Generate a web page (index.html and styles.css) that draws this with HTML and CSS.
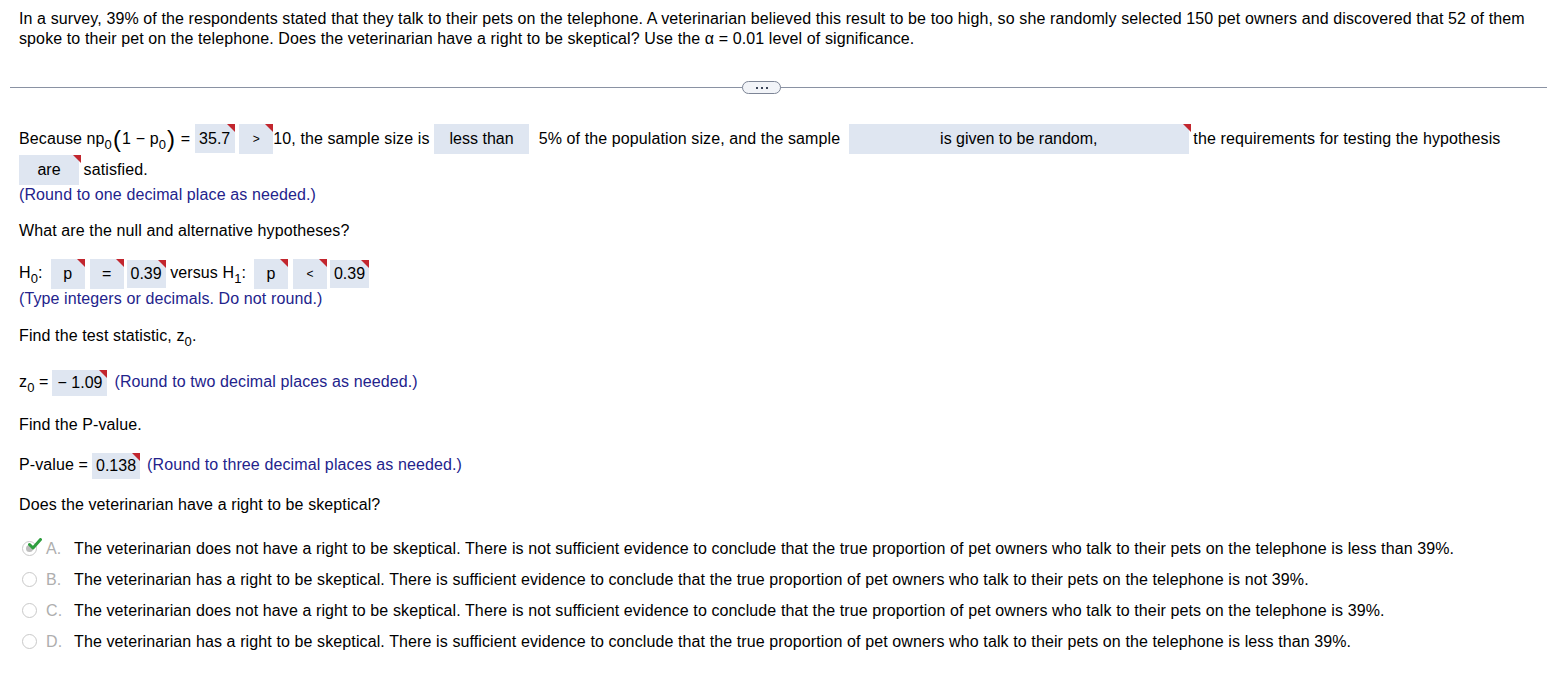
FILE: index.html
```html
<!DOCTYPE html>
<html>
<head>
<meta charset="utf-8">
<link rel="stylesheet" href="styles.css">
</head>
<body>
<div class="page">
  <div class="question">In a survey, 39% of the respondents stated that they talk to their pets on the telephone. A veterinarian believed this result to be too high, so she randomly selected 150 pet owners and discovered that 52 of them spoke to their pet on the telephone. Does the veterinarian have a right to be skeptical? Use the α = 0.01 level of significance.</div>

  <div class="divider"><span class="pill"><i></i><i></i><i></i></span></div>

  <div class="answer">
    <p class="req">Because np<sub>0</sub><span class="paren">(</span>1 − p<sub>0</sub><span class="paren">)</span> = <span class="box num w40">35.7<b class="mark"></b></span> <span class="box drop w34 small">&gt;<b class="mark"></b></span>10, the sample size is <span class="box drop w95 gapr">less than</span> 5% of the population size, and the sample <span class="box drop w340 gapl">is given to be random,<b class="mark out"></b></span> the requirements for testing the hypothesis <span class="box drop w60">are<b class="mark out"></b></span> satisfied.</p>
    <p class="hint">(Round to one decimal place as needed.)</p>

    <p class="txt m16">What are the null and alternative hypotheses?</p>

    <p class="hyp">H<sub>0</sub>:<span class="box drop w34 first">p<b class="mark"></b></span><span class="box drop w34">=<b class="mark"></b></span><span class="box num w39 tight">0.39<b class="mark"></b></span> versus H<sub>1</sub>:<span class="box drop w34 first">p<b class="mark"></b></span><span class="box drop w34 small">&lt;<b class="mark"></b></span><span class="box num w39 tight">0.39<b class="mark"></b></span></p>
    <p class="hint m1">(Type integers or decimals. Do not round.)</p>

    <p class="txt m17">Find the test statistic, z<sub>0</sub>.</p>

    <p class="inrow m23">z<sub>0</sub> =<span class="box inp w55">− 1.09<b class="mark"></b></span><span class="hint">(Round to two decimal places as needed.)</span></p>

    <p class="txt m20">Find the P-value.</p>

    <p class="inrow m17">P-value =<span class="box inp w48">0.138<b class="mark"></b></span><span class="hint">(Round to three decimal places as needed.)</span></p>

    <p class="txt m17">Does the veterinarian have a right to be skeptical?</p>

    <ul class="options">
      <li><span class="radio sel"><svg class="check" width="14" height="12" viewBox="0 0 14 12"><path d="M1.5 6.5 L5 10 L12.5 1.5" fill="none" stroke="#2e9e3e" stroke-width="3" stroke-linecap="round" stroke-linejoin="round"/></svg></span><span class="letter">A.</span><span>The veterinarian does not have a right to be skeptical. There is not sufficient evidence to conclude that the true proportion of pet owners who talk to their pets on the telephone is less than 39%.</span></li>
      <li><span class="radio"></span><span class="letter">B.</span><span>The veterinarian has a right to be skeptical. There is sufficient evidence to conclude that the true proportion of pet owners who talk to their pets on the telephone is not 39%.</span></li>
      <li><span class="radio"></span><span class="letter">C.</span><span>The veterinarian does not have a right to be skeptical. There is not sufficient evidence to conclude that the true proportion of pet owners who talk to their pets on the telephone is 39%.</span></li>
      <li><span class="radio"></span><span class="letter">D.</span><span>The veterinarian has a right to be skeptical. There is sufficient evidence to conclude that the true proportion of pet owners who talk to their pets on the telephone is less than 39%.</span></li>
    </ul>
  </div>
</div>
</body>
</html>
```

FILE: styles.css
```css
* { box-sizing: border-box; }
html, body { margin: 0; padding: 0; background: #fff; }
body {
  font-family: "Liberation Sans", Arial, sans-serif;
  font-size: 16px;
  letter-spacing: 0.11px;
  color: #000;
}
.page { padding: 0 10px; }
p { margin: 0; }

.question {
  padding: 9px 9px 0;
  line-height: 20px;
}

.divider {
  position: relative;
  margin-top: 38px;
  height: 1px;
  background: #8a92a3;
}
.pill {
  position: absolute;
  left: 732px;
  top: -6px;
  width: 39px;
  height: 13px;
  border: 1px solid #7d8596;
  border-radius: 7px;
  background: #f2f4f8;
  display: flex;
  align-items: center;
  justify-content: center;
  gap: 3px;
}
.pill i {
  width: 2px;
  height: 2px;
  background: #3a4458;
  display: block;
}

.answer { padding: 35px 9px 0; }

sub { font-size: 13px; vertical-align: -5px; line-height: 0; }
.paren {
  font-size: 24px;
  font-weight: 300;
  vertical-align: -3px;
  line-height: 0;
  margin: 0 1px;
}

.req { line-height: 31px; }
.hint { color: #23238c; line-height: 20px; }
.txt { line-height: 20px; }
.m1 { margin-top: 1px; }
.m16 { margin-top: 16px; }
.m17 { margin-top: 17px; }
.m20 { margin-top: 20px; }
.m23 { margin-top: 23px; }

.box {
  position: relative;
  display: inline-flex;
  align-items: center;
  justify-content: center;
  background: #dfe6f1;
  vertical-align: middle;
  line-height: 1;
  letter-spacing: 0;
}
.drop { height: 30px; }
.num { height: 29px; }
.inp { height: 26px; }
.small { font-size: 12px; }
.w34 { width: 34px; }
.w39 { width: 39px; }
.w40 { width: 40px; }
.w48 { width: 48px; }
.w55 { width: 55px; }
.w60 { width: 60px; }
.w95 { width: 95px; }
.w340 { width: 340px; }
.gapr { margin-right: 5px; }
.gapl { margin-left: 4px; }
.req .box { margin-top: -2px; }

.mark {
  position: absolute;
  top: 0;
  right: 0;
  width: 0;
  height: 0;
  border-top: 8px solid #c2262e;
  border-left: 8px solid transparent;
}
.mark.out { right: -2px; }

.hyp {
  margin-top: 17px;
  height: 30px;
  line-height: 30px;
}
.hyp .box { margin-left: 5px; }
.hyp .box.first { margin-left: 8px; }
.hyp .box.tight { margin-left: 3px; height: 28px; }

.inrow {
  height: 26px;
  line-height: 26px;
}
.inrow .box { margin-left: 4px; margin-right: 7px; }
.inrow .hint { line-height: 26px; }

.options {
  list-style: none;
  margin: 18px 0 0;
  padding: 0;
}
.options li {
  display: flex;
  align-items: center;
  height: 31px;
  line-height: 31px;
}
.radio {
  position: relative;
  width: 15px;
  height: 15px;
  border: 1px solid #c9c9c9;
  border-radius: 50%;
  margin-left: 3px;
  margin-right: 9px;
  background: #fff;
  flex: none;
}
.radio.sel::after {
  content: "";
  position: absolute;
  left: 3px;
  top: 3px;
  width: 7px;
  height: 7px;
  border-radius: 50%;
  background: #bdbdbd;
}
.check {
  position: absolute;
  left: 5px;
  top: -4px;
  z-index: 1;
}
.letter {
  color: #aeaeae;
  width: 28px;
  flex: none;
}
```
